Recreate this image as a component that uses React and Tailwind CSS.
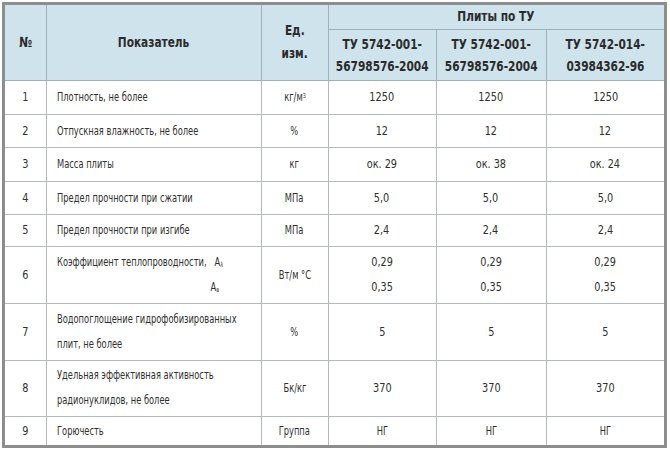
// condensed text: the installed fonts are too wide, so squeeze each run horizontally
function T({ children, o = 'origin-center', s = 'scale-x-[0.77]' }) {
  return <span className={`inline-block whitespace-nowrap ${s} ${o}`}>{children}</span>;
}

// numbers sit wider in the source font
function N({ children }) {
  return <T s="scale-x-[0.9]">{children}</T>;
}

function H({ children }) {
  return (
    <div className="flex justify-center">
      <T s="scale-x-[0.84]">{children}</T>
    </div>
  );
}

const rows = [
  { n: '1', name: 'Плотность, не более', unit: <>кг/м<sup className="text-[7px]">3</sup></>, vals: ['1250', '1250', '1250'], h: 'h-[34px]' },
  { n: '2', name: 'Отпускная влажность, не более', unit: '%', vals: ['12', '12', '12'], h: 'h-[33px]' },
  { n: '3', name: 'Масса плиты', unit: 'кг', vals: ['ок. 29', 'ок. 38', 'ок. 24'], h: 'h-[34px]' },
  { n: '4', name: 'Предел прочности при сжатии', unit: 'МПа', vals: ['5,0', '5,0', '5,0'], h: 'h-[33px]' },
  { n: '5', name: 'Предел прочности при изгибе', unit: 'МПа', vals: ['2,4', '2,4', '2,4'], h: 'h-[32px]' },
];

const rowsB = [
  { n: '7', name: ['Водопоглощение гидрофобизированных', 'плит, не более'], unit: '%', vals: ['5', '5', '5'], h: 'h-[57px]' },
  { n: '8', name: ['Удельная эффективная активность', 'радионуклидов, не более'], unit: 'Бк/кг', vals: ['370', '370', '370'], h: 'h-[56px]' },
];

const cell = 'border-[1.5px] border-[#b4b9bc] text-center align-middle p-0';
const left = 'border-[1.5px] border-[#b4b9bc] text-left align-middle p-0 pl-[10px] overflow-visible';
const head = 'border-[1.5px] border-[#9fb0b8] text-center align-middle p-0';

export default function App() {
  return (
    <div className="w-[670px] h-[453px] bg-white p-[2px]" style={{ fontFamily: '"DejaVu Sans Condensed", "DejaVu Sans", sans-serif' }}>
      <div className="w-[665px] border-[3px] border-[#8d8d8d] text-[12px] text-[#2f2f2f]">
        <table className="w-[659px] table-fixed border-collapse border-hidden">
          <colgroup>
            <col className="w-[41px]" />
            <col className="w-[215px]" />
            <col className="w-[67px]" />
            <col className="w-[108px]" />
            <col className="w-[110px]" />
            <col className="w-[118px]" />
          </colgroup>
          <thead className="bg-[#cfe3ec] text-[14px] font-bold text-[#2b2b2b]">
            <tr className="h-[24px]">
              <th rowSpan={2} className={head}><H>№</H></th>
              <th rowSpan={2} className={head}><H>Показатель</H></th>
              <th rowSpan={2} className={`${head} leading-[23px]`}><H>Ед.</H><H>изм.</H></th>
              <th colSpan={3} className={head}><H>Плиты по ТУ</H></th>
            </tr>
            <tr className="h-[51px] leading-[22px]">
              <th className={head}><H>ТУ 5742-001-</H><H>56798576-2004</H></th>
              <th className={head}><H>ТУ 5742-001-</H><H>56798576-2004</H></th>
              <th className={head}><H>ТУ 5742-014-</H><H>03984362-96</H></th>
            </tr>
          </thead>
          <tbody>
            {rows.map((r) => (
              <tr key={r.n} className={r.h}>
                <td className={cell}><N>{r.n}</N></td>
                <td className={left}><T o="origin-left">{r.name}</T></td>
                <td className={cell}><T>{r.unit}</T></td>
                {r.vals.map((v, i) => <td key={i} className={cell}><N>{v}</N></td>)}
              </tr>
            ))}
            <tr className="h-[57px]">
              <td className={cell}><N>6</N></td>
              <td className={`${left} leading-[25px]`}>
                <div><T o="origin-left">Коэффициент теплопроводности,&nbsp;&nbsp;&nbsp;А<sub className="text-[7px]">λ</sub></T></div>
                <div className="text-right pr-[41px]"><T o="origin-right">А<sub className="text-[7px]">в</sub></T></div>
              </td>
              <td className={cell}><T>Вт/м °С</T></td>
              {[0, 1, 2].map((i) => (
                <td key={i} className={`${cell} leading-[25px]`}><N>0,29</N><br /><N>0,35</N></td>
              ))}
            </tr>
            {rowsB.map((r) => (
              <tr key={r.n} className={r.h}>
                <td className={cell}><N>{r.n}</N></td>
                <td className={`${left} leading-[25px]`}>
                  <div><T o="origin-left">{r.name[0]}</T></div>
                  <div><T o="origin-left">{r.name[1]}</T></div>
                </td>
                <td className={cell}><T>{r.unit}</T></td>
                {r.vals.map((v, i) => <td key={i} className={cell}><N>{v}</N></td>)}
              </tr>
            ))}
            <tr className="h-[29px]">
              <td className={cell}><N>9</N></td>
              <td className={left}><T o="origin-left">Горючесть</T></td>
              <td className={cell}><T>Группа</T></td>
              {['НГ', 'НГ', 'НГ'].map((v, i) => <td key={i} className={cell}><T>{v}</T></td>)}
            </tr>
          </tbody>
        </table>
      </div>
    </div>
  );
}
